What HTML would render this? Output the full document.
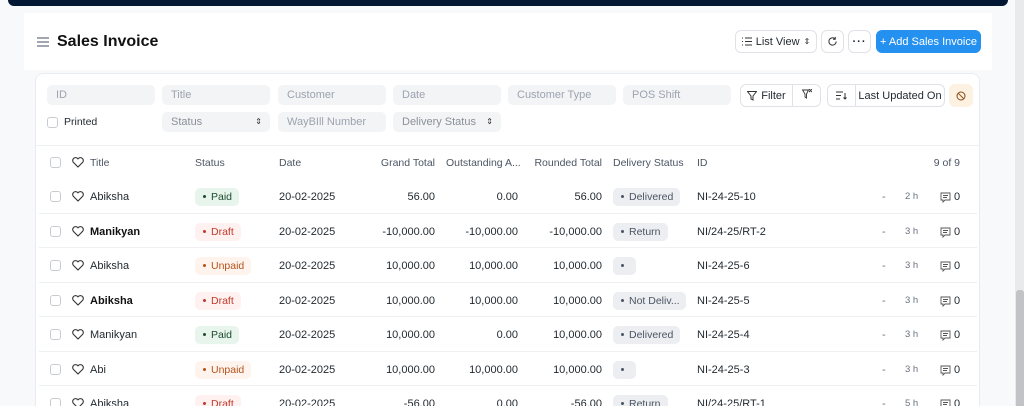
<!DOCTYPE html>
<html style="width:1024px;height:406px;overflow:hidden"><head><meta charset="utf-8"><style>
*{box-sizing:border-box;margin:0;padding:0}
body{width:1024px;height:406px;overflow:hidden;background:#f8f9fa;font-family:"Liberation Sans",sans-serif;font-size:11px;color:#1f272e;position:relative}
.abs{position:absolute}
.topbar{left:8px;top:0;width:1000px;height:6px;background:#011733;border-radius:0 0 6px 6px}
.sb{left:1015px;top:0;width:9px;height:406px;background:#e9eaeb}
.thumb{left:1016px;top:290px;width:8px;height:120px;background:#c1c3c6;border-radius:3px}
.head{left:24px;top:13px;width:968px;height:57px;background:#fff}
.card{left:35px;top:73px;width:945px;height:333px;background:#fff;border:1px solid #e9ecef;border-bottom:none;border-radius:8px 8px 0 0}
.inp{position:absolute;height:20px;background:#f3f4f6;border-radius:5px;color:#9ca3af;font-size:11px;line-height:20px;padding-left:9px;width:108px}
.btn{position:absolute;height:23px;border:1px solid #dfe2e6;border-radius:6px;background:#fff;display:flex;align-items:center;justify-content:center;font-size:11px;color:#1f272e;white-space:nowrap}
.row{position:absolute;left:39px;width:938px;height:34.5px;border-bottom:1px solid #eef0f2}
.c{position:absolute;top:1px;height:34px;line-height:34px;white-space:nowrap}
.cb{position:absolute;left:11px;top:12px;width:11px;height:11px;border:1px solid #c8ccd1;border-radius:3px}
.pill{position:absolute;top:9px;height:18px;line-height:18px;border-radius:5px;padding:0 7px 0 8px;font-size:10.5px;white-space:nowrap;overflow:hidden}
.pill:before{content:"";display:inline-block;width:3px;height:3px;border-radius:2px;background:currentColor;margin-right:5px;vertical-align:2px}
.paid{background:#e8f5ec;color:#1d4a2c}.draft{background:#fff1f0;color:#c0392b}.unpaid{background:#fff3ee;color:#b4531a}
.gray{background:#eceef1;color:#4b5563}
.r{text-align:right}
.muted{color:#6b7280}
</style></head><body>
<div class="abs topbar"></div>
<div class="abs sb"></div><div class="abs thumb"></div>
<div class="abs head">
 <svg class="abs" style="left:13px;top:24px" width="12" height="10" viewBox="0 0 12 10"><path d="M0 1h12M0 5h12M0 9h12" stroke="#6b7280" stroke-width="1.2"/></svg>
 <div class="abs" style="left:33px;top:20px;font-size:16px;font-weight:bold;color:#111">Sales Invoice</div>
 <div class="btn" style="left:711px;top:17px;width:82px">
  <svg width="10" height="9" viewBox="0 0 10 9" style="margin-right:4px"><path d="M0 1h1M3 1h7M0 4.5h1M3 4.5h7M0 8h1M3 8h7" stroke="#333" stroke-width="1"/></svg>List View <span style="font-size:8px;margin-left:4px">⇕</span></div>
 <div class="btn" style="left:797px;top:17px;width:23px"><svg width="11" height="11" viewBox="0 0 12 12"><path d="M10 6a4 4 0 1 1-1.2-2.9M9 1v2.5H6.5" fill="none" stroke="#333" stroke-width="1.1"/></svg></div>
 <div class="btn" style="left:824px;top:17px;width:23px;font-weight:bold;letter-spacing:1px">···</div>
 <div class="btn" style="left:852px;top:17px;width:105px;background:#2490ef;border-color:#2490ef;color:#fff;font-size:11px">+ Add Sales Invoice</div>
</div>
<div class="abs card">
 <div class="inp" style="left:11px;top:11px">ID</div>
 <div class="inp" style="left:126px;top:11px">Title</div>
 <div class="inp" style="left:242px;top:11px">Customer</div>
 <div class="inp" style="left:357px;top:11px">Date</div>
 <div class="inp" style="left:472px;top:11px">Customer Type</div>
 <div class="inp" style="left:587px;top:11px">POS Shift</div>
 <div class="cb" style="left:11px;top:43px"></div>
 <div class="abs" style="left:28px;top:42px;font-size:10.5px">Printed</div>
 <div class="inp" style="left:126px;top:38px;color:#8a9099">Status<span style="position:absolute;right:8px;font-size:8px;color:#333">⇕</span></div>
 <div class="inp" style="left:242px;top:38px">WayBIll Number</div>
 <div class="inp" style="left:357px;top:38px;color:#8a9099">Delivery Status<span style="position:absolute;right:8px;font-size:8px;color:#333">⇕</span></div>
 <div class="btn" style="left:704px;top:10px;width:81px;justify-content:flex-start">
  <div style="width:52px;height:100%;display:flex;align-items:center;justify-content:center;border-right:1px solid #dfe2e6"><svg width="10" height="10" viewBox="0 0 10 10" style="margin-right:4px"><path d="M0.5 0.5h9L6 5v4L4 8V5z" fill="none" stroke="#333"/></svg>Filter</div>
  <div style="flex:1;text-align:center"><svg width="10" height="10" viewBox="0 0 10 10"><path d="M0.5 1h6L4.5 5v4L3 8V5zM7 0l3 3M10 0L7 3" fill="none" stroke="#333" stroke-width=".9"/></svg></div>
 </div>
 <div class="btn" style="left:791px;top:10px;width:118px;justify-content:flex-start">
  <div style="width:28px;height:100%;display:flex;align-items:center;justify-content:center;border-right:1px solid #dfe2e6"><svg width="11" height="9" viewBox="0 0 11 9"><path d="M0 1h7M0 4.5h5M0 8h4M9 2v6M7.5 6.5 9 8l1.5-1.5" fill="none" stroke="#333"/></svg></div>
  <div style="flex:1;text-align:center">Last Updated On</div>
 </div>
 <div class="btn" style="left:913px;top:10px;width:24px;background:#fdf1e1;border-color:#fdf1e1"><svg width="10" height="10" viewBox="0 0 10 10"><circle cx="5" cy="5" r="4" fill="none" stroke="#8a4a14"/><path d="M2.2 2.2l5.6 5.6" stroke="#8a4a14"/></svg></div>
 <div style="position:absolute;left:0;top:71px;width:943px;border-top:1px solid #eef0f2"></div>
</div>
<div id="rows"></div>
<div class="row" style="top:145px;border:none;color:#4b5563;font-size:10.5px">
 <div class="cb"></div>
 <svg class="abs" style="left:33px;top:12px" width="12" height="11" viewBox="0 0 12 11"><path d="M6 10 1.3 5.3a2.7 2.7 0 0 1 4.7-3.5 2.7 2.7 0 0 1 4.7 3.5z" fill="none" stroke="#333" stroke-width="1.1"/></svg>
 <div class="c" style="left:51px">Title</div><div class="c" style="left:156px">Status</div><div class="c" style="left:240px">Date</div>
 <div class="c r" style="right:542px">Grand Total</div><div class="c" style="left:407px">Outstanding A...</div><div class="c r" style="right:375px">Rounded Total</div>
 <div class="c" style="left:574px">Delivery Status</div><div class="c" style="left:658px">ID</div><div class="c r" style="right:17px">9 of 9</div>
</div>
<script>
var d=[["Abiksha",0,"paid","Paid","56.00","0.00","56.00","Delivered","NI-24-25-10","2 h"],
["Manikyan",1,"draft","Draft","-10,000.00","-10,000.00","-10,000.00","Return","NI/24-25/RT-2","3 h"],
["Abiksha",0,"unpaid","Unpaid","10,000.00","10,000.00","10,000.00","","NI-24-25-6","3 h"],
["Abiksha",1,"draft","Draft","10,000.00","10,000.00","10,000.00","Not Deliv...","NI-24-25-5","3 h"],
["Manikyan",0,"paid","Paid","10,000.00","0.00","10,000.00","Delivered","NI-24-25-4","3 h"],
["Abi",0,"unpaid","Unpaid","10,000.00","10,000.00","10,000.00","","NI-24-25-3","3 h"],
["Abiksha",0,"draft","Draft","-56.00","0.00","-56.00","Return","NI/24-25/RT-1","5 h"]];
var h="";d.forEach(function(r,i){var t=179+i*34.5;
h+='<div class="row" style="top:'+t+'px"><div class="cb"></div><svg class="abs" style="left:33px;top:12px" width="12" height="11" viewBox="0 0 12 11"><path d="M6 10 1.3 5.3a2.7 2.7 0 0 1 4.7-3.5 2.7 2.7 0 0 1 4.7 3.5z" fill="none" stroke="#333" stroke-width="1.1"/></svg>'+
'<div class="c" style="left:51px;'+(r[1]?'font-weight:bold;color:#111':'')+'">'+r[0]+'</div>'+
'<div class="pill '+r[2]+'" style="left:156px">'+r[3]+'</div>'+
'<div class="c" style="left:240px">20-02-2025</div>'+
'<div class="c r" style="right:542px">'+r[4]+'</div><div class="c r" style="right:459px">'+r[5]+'</div><div class="c r" style="right:375px">'+r[6]+'</div>'+
'<div class="pill gray" style="left:574px;'+(r[7].length>9?'width:73px':'')+'">'+r[7]+'</div>'+
'<div class="c" style="left:658px">'+r[8]+'</div>'+
'<div class="c muted" style="left:843px">-</div><div class="c muted" style="left:866px;font-size:9.5px">'+r[9]+'</div>'+
'<svg class="abs" style="left:901px;top:13px" width="11" height="11" viewBox="0 0 11 11"><path d="M1 1h9v7H5l-2 2V8H1z M3 3.5h5M3 5.5h4" fill="none" stroke="#555" stroke-width="0.9"/></svg><div class="c" style="left:915px">0</div></div>';});
document.getElementById("rows").innerHTML=h;
</script>
</body></html>
